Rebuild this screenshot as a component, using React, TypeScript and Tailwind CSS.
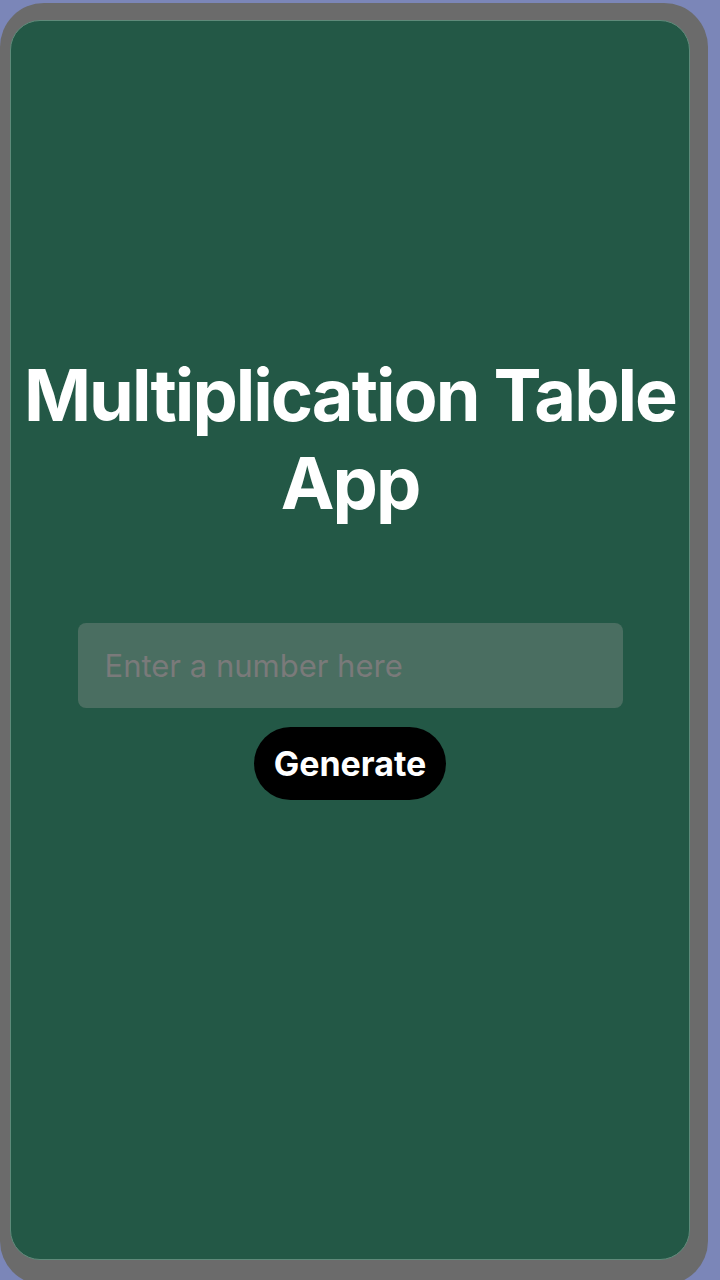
function App() {
  return (
    <div className="min-h-[1280px] w-[720px] bg-[#7b86b8] pt-[3px] overflow-hidden">
      <div className="w-[708px] h-[1282px] rounded-[44px] bg-[#6b6b6b] pl-[10px] pr-[18px] pt-[17px] pb-[22px]">
        <div className="h-[1240px] rounded-[30px] bg-[#235846] border border-[#5f8a7a] flex flex-col items-center pt-[330px] font-['Inter','Liberation_Sans',sans-serif]">
          <h1 className="w-full text-[72px] leading-[88px] font-bold text-white text-center tracking-[-2px]">
            Multiplication Table App
          </h1>
          <input
            type="text"
            placeholder="Enter a number here"
            className="mt-[96px] w-[545px] h-[85px] rounded-[8px] bg-[#4a6e61] px-[27px] text-[31px] text-white placeholder:text-[#7a7a7a] outline-none"
          />
          <button className="mt-[19px] h-[73px] px-[20px] rounded-full bg-black text-white text-[34px] font-bold">
            Generate
          </button>
        </div>
      </div>
    </div>
  );
}

export default App;
